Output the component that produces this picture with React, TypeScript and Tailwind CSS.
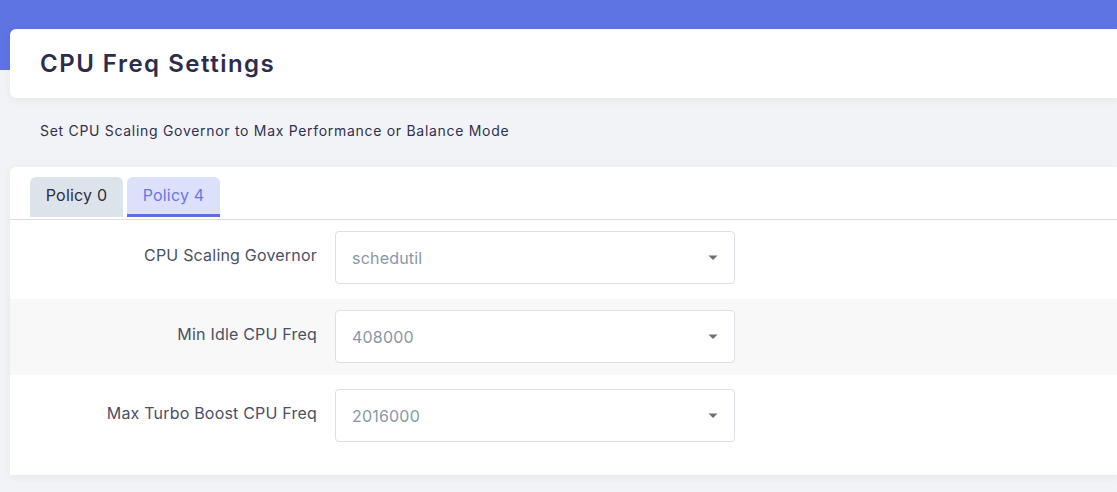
import React from "react";

const rows = [
  { label: "CPU Scaling Governor", value: "schedutil", cls: "h-[79px] pt-[11px] bg-white" },
  { label: "Min Idle CPU Freq", value: "408000", cls: "h-[76px] pt-[11px] bg-[#f8f8f8]" },
  { label: "Max Turbo Boost CPU Freq", value: "2016000", cls: "h-[100px] pt-[14px] bg-white" },
];

function Caret() {
  return (
    <svg width="10" height="6" viewBox="0 0 10 6" className="text-[#6f6f6f]">
      <path d="M0.5 0.5h9L5 5z" fill="currentColor" />
    </svg>
  );
}

export default function App() {
  return (
    <div
      className="relative min-h-[492px] w-full overflow-hidden bg-[#f2f3f6]"
      style={{ fontFamily: "Inter, 'Noto Sans', sans-serif" }}
    >
      <div className="absolute inset-x-0 top-0 h-[70px] bg-[#5e74e3]" />
      <div className="relative pl-[10px] pt-[29px]">
        <div className="flex h-[69px] items-center rounded-l-md bg-white pl-[30px] shadow-[0_2px_8px_rgba(0,0,0,0.06)]">
          <h1 className="text-[24px] font-semibold tracking-[1.5px] text-[#2c2d4e]">
            CPU Freq Settings
          </h1>
        </div>

        <p className="h-[69px] pl-[30px] pt-[22px] text-[14px] tracking-[0.7px] text-[#2f3052]">
          Set CPU Scaling Governor to Max Performance or Balance Mode
        </p>

        <div className="rounded-l-md bg-white shadow-[0_2px_8px_rgba(0,0,0,0.06)]">
          <div className="flex gap-[4px] border-b border-[#dcdcdc] pb-[2px] pl-[20px] pt-[10px]">
            <div className="flex h-[40px] w-[93px] items-center justify-center rounded-t-md bg-[#dde3ea] pb-[4px] text-[16px] tracking-[0.2px] text-[#2c2d3e]">
              Policy 0
            </div>
            <div className="flex h-[40px] w-[93px] items-center justify-center rounded-t-md border-b-[3px] border-[#5e6ee0] bg-[#dde0fb] pb-[1px] text-[16px] tracking-[0.2px] text-[#6877e0]">
              Policy 4
            </div>
          </div>

          {rows.map((r) => (
            <div key={r.label} className={`flex items-start ${r.cls}`}>
              <div className="w-[308px] pr-px pt-[12px] text-right text-[16px] tracking-[0.2px] text-[#4a5065]">
                {r.label}
              </div>
              <div className="ml-[17px] flex h-[53px] w-[400px] items-center justify-between rounded-[4px] border border-[#dcdfe6] bg-white pl-[16px] pr-[16px]">
                <span className="text-[16px] tracking-[0.2px] text-[#8797a8]">{r.value}</span>
                <Caret />
              </div>
            </div>
          ))}
        </div>
      </div>
    </div>
  );
}
